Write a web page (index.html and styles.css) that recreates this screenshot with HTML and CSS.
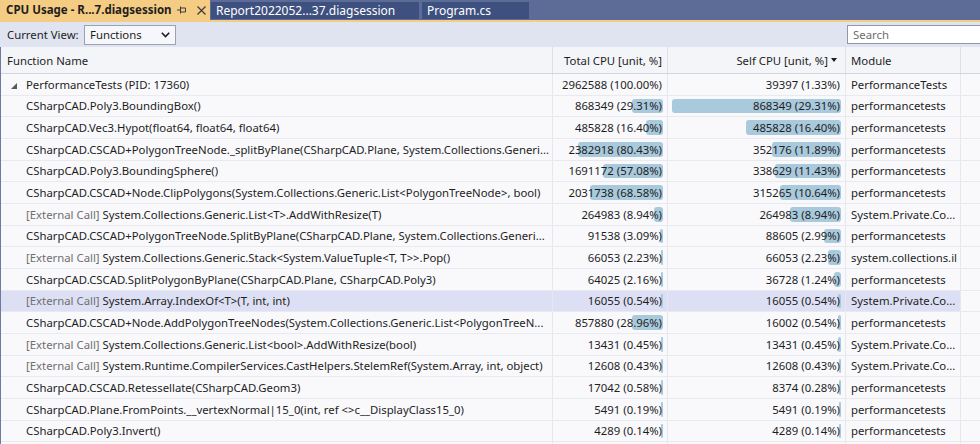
FILE: index.html
```html
<!DOCTYPE html>
<html lang="en">
<head>
    <meta charset="UTF-8">
    <title>CPU Usage</title>
    <link rel="stylesheet" href="styles.css">
</head>
<body>

    <div class="tabs">
        <div class="tab active">
            <span class="tab-title">CPU Usage - R...7.diagsession</span>
            <svg class="pin" width="10" height="8" viewBox="0 0 10 8">
                <path d="M0 4H3M3.5 0.5V7.5M3.5 2H8.5V6H3.5" fill="none" stroke="#3b3b3b" stroke-width="1"/>
            </svg>
            <svg class="close" width="9" height="9" viewBox="0 0 9 9">
                <path d="M0.5 0.5L8.5 8.5M8.5 0.5L0.5 8.5" stroke="#3b3b3b" stroke-width="1.2"/>
            </svg>
        </div>
        <div class="tab">Report2022052...37.diagsession</div>
        <div class="tab tab-gap">Program.cs</div>
    </div>

    <div class="toolbar">
        <label class="view-label">Current View:</label>
        <div class="dropdown">
            <span>Functions</span>
            <svg width="9" height="6" viewBox="0 0 9 6">
                <path d="M0.8 0.8L4.5 4.6L8.2 0.8" fill="none" stroke="#1e1e1e" stroke-width="1.6"/>
            </svg>
        </div>
        <div class="search">Search</div>
    </div>

    <div class="grid">
        <div class="row head">
            <div class="cell name">Function Name</div>
            <div class="cell num">Total CPU [unit, %]</div>
            <div class="cell num">Self CPU [unit, %]<span class="sort"></span></div>
            <div class="cell module">Module</div>
            <div class="cell rest"></div>
        </div>

        <div class="row">
            <div class="cell name">
                <svg class="expander" width="6" height="6" viewBox="0 0 6 6"><path d="M6 0V6H0Z" fill="#595959"/></svg>
                PerformanceTests (PID: 17360)
            </div>
            <div class="cell num"><span class="val">2962588 (100.00%)</span></div>
            <div class="cell num"><span class="val">39397 (1.33%)</span></div>
            <div class="cell module">PerformanceTests</div>
            <div class="cell rest"></div>
        </div>

        <div class="row">
            <div class="cell name">CSharpCAD.Poly3.BoundingBox()</div>
            <div class="cell num"><i class="bar" style="width: 31.1px"></i><span class="val">868349 (29.31%)</span></div>
            <div class="cell num"><i class="bar" style="width: 169px"></i><span class="val">868349 (29.31%)</span></div>
            <div class="cell module">performancetests</div>
            <div class="cell rest"></div>
        </div>

        <div class="row">
            <div class="cell name">CSharpCAD.Vec3.Hypot(float64, float64, float64)</div>
            <div class="cell num"><i class="bar" style="width: 17.4px"></i><span class="val">485828 (16.40%)</span></div>
            <div class="cell num"><i class="bar" style="width: 94.6px"></i><span class="val">485828 (16.40%)</span></div>
            <div class="cell module">performancetests</div>
            <div class="cell rest"></div>
        </div>

        <div class="row">
            <div class="cell name">CSharpCAD.CSCAD+PolygonTreeNode._splitByPlane(CSharpCAD.Plane, System.Collections.Generi...</div>
            <div class="cell num"><i class="bar" style="width: 85.3px"></i><span class="val">2382918 (80.43%)</span></div>
            <div class="cell num"><i class="bar" style="width: 68.6px"></i><span class="val">352176 (11.89%)</span></div>
            <div class="cell module">performancetests</div>
            <div class="cell rest"></div>
        </div>

        <div class="row">
            <div class="cell name">CSharpCAD.Poly3.BoundingSphere()</div>
            <div class="cell num"><i class="bar" style="width: 60.5px"></i><span class="val">1691172 (57.08%)</span></div>
            <div class="cell num"><i class="bar" style="width: 65.9px"></i><span class="val">338629 (11.43%)</span></div>
            <div class="cell module">performancetests</div>
            <div class="cell rest"></div>
        </div>

        <div class="row">
            <div class="cell name">CSharpCAD.CSCAD+Node.ClipPolygons(System.Collections.Generic.List&lt;PolygonTreeNode&gt;, bool)</div>
            <div class="cell num"><i class="bar" style="width: 72.7px"></i><span class="val">2031738 (68.58%)</span></div>
            <div class="cell num"><i class="bar" style="width: 61.4px"></i><span class="val">315265 (10.64%)</span></div>
            <div class="cell module">performancetests</div>
            <div class="cell rest"></div>
        </div>

        <div class="row">
            <div class="cell name"><span class="ext">[External Call]</span> System.Collections.Generic.List&lt;T&gt;.AddWithResize(T)</div>
            <div class="cell num"><i class="bar" style="width: 9.5px"></i><span class="val">264983 (8.94%)</span></div>
            <div class="cell num"><i class="bar" style="width: 51.5px"></i><span class="val">264983 (8.94%)</span></div>
            <div class="cell module">System.Private.Co...</div>
            <div class="cell rest"></div>
        </div>

        <div class="row">
            <div class="cell name">CSharpCAD.CSCAD+PolygonTreeNode.SplitByPlane(CSharpCAD.Plane, System.Collections.Generi...</div>
            <div class="cell num"><i class="bar" style="width: 3.3px"></i><span class="val">91538 (3.09%)</span></div>
            <div class="cell num"><i class="bar" style="width: 17.2px"></i><span class="val">88605 (2.99%)</span></div>
            <div class="cell module">performancetests</div>
            <div class="cell rest"></div>
        </div>

        <div class="row">
            <div class="cell name"><span class="ext">[External Call]</span> System.Collections.Generic.Stack&lt;System.ValueTuple&lt;T, T&gt;&gt;.Pop()</div>
            <div class="cell num"><i class="bar" style="width: 2.4px"></i><span class="val">66053 (2.23%)</span></div>
            <div class="cell num"><i class="bar" style="width: 12.9px"></i><span class="val">66053 (2.23%)</span></div>
            <div class="cell module">system.collections.il</div>
            <div class="cell rest"></div>
        </div>

        <div class="row">
            <div class="cell name">CSharpCAD.CSCAD.SplitPolygonByPlane(CSharpCAD.Plane, CSharpCAD.Poly3)</div>
            <div class="cell num"><i class="bar" style="width: 2.3px"></i><span class="val">64025 (2.16%)</span></div>
            <div class="cell num"><i class="bar" style="width: 7.2px"></i><span class="val">36728 (1.24%)</span></div>
            <div class="cell module">performancetests</div>
            <div class="cell rest"></div>
        </div>

        <div class="row selected">
            <div class="cell name"><span class="ext">[External Call]</span> System.Array.IndexOf&lt;T&gt;(T, int, int)</div>
            <div class="cell num"><i class="bar" style="width: 0.6px"></i><span class="val">16055 (0.54%)</span></div>
            <div class="cell num"><i class="bar" style="width: 3.1px"></i><span class="val">16055 (0.54%)</span></div>
            <div class="cell module">System.Private.Co...</div>
            <div class="cell rest"></div>
        </div>

        <div class="row">
            <div class="cell name">CSharpCAD.CSCAD+Node.AddPolygonTreeNodes(System.Collections.Generic.List&lt;PolygonTreeN...</div>
            <div class="cell num"><i class="bar" style="width: 30.7px"></i><span class="val">857880 (28.96%)</span></div>
            <div class="cell num"><i class="bar" style="width: 3.1px"></i><span class="val">16002 (0.54%)</span></div>
            <div class="cell module">performancetests</div>
            <div class="cell rest"></div>
        </div>

        <div class="row">
            <div class="cell name"><span class="ext">[External Call]</span> System.Collections.Generic.List&lt;bool&gt;.AddWithResize(bool)</div>
            <div class="cell num"><i class="bar" style="width: 0.5px"></i><span class="val">13431 (0.45%)</span></div>
            <div class="cell num"><i class="bar" style="width: 2.6px"></i><span class="val">13431 (0.45%)</span></div>
            <div class="cell module">System.Private.Co...</div>
            <div class="cell rest"></div>
        </div>

        <div class="row">
            <div class="cell name"><span class="ext">[External Call]</span> System.Runtime.CompilerServices.CastHelpers.StelemRef(System.Array, int, object)</div>
            <div class="cell num"><i class="bar" style="width: 0.5px"></i><span class="val">12608 (0.43%)</span></div>
            <div class="cell num"><i class="bar" style="width: 2.5px"></i><span class="val">12608 (0.43%)</span></div>
            <div class="cell module">System.Private.Co...</div>
            <div class="cell rest"></div>
        </div>

        <div class="row">
            <div class="cell name">CSharpCAD.CSCAD.Retessellate(CSharpCAD.Geom3)</div>
            <div class="cell num"><i class="bar" style="width: 0.6px"></i><span class="val">17042 (0.58%)</span></div>
            <div class="cell num"><i class="bar" style="width: 1.6px"></i><span class="val">8374 (0.28%)</span></div>
            <div class="cell module">performancetests</div>
            <div class="cell rest"></div>
        </div>

        <div class="row">
            <div class="cell name">CSharpCAD.Plane.FromPoints.__vertexNormal|15_0(int, ref &lt;&gt;c__DisplayClass15_0)</div>
            <div class="cell num"><i class="bar" style="width: 0.2px"></i><span class="val">5491 (0.19%)</span></div>
            <div class="cell num"><i class="bar" style="width: 1.1px"></i><span class="val">5491 (0.19%)</span></div>
            <div class="cell module">performancetests</div>
            <div class="cell rest"></div>
        </div>

        <div class="row">
            <div class="cell name">CSharpCAD.Poly3.Invert()</div>
            <div class="cell num"><i class="bar" style="width: 0.2px"></i><span class="val">4289 (0.14%)</span></div>
            <div class="cell num"><i class="bar" style="width: 0.8px"></i><span class="val">4289 (0.14%)</span></div>
            <div class="cell module">performancetests</div>
            <div class="cell rest"></div>
        </div>

        <div class="row">
            <div class="cell name"></div>
            <div class="cell num"></div>
            <div class="cell num"></div>
            <div class="cell module"></div>
            <div class="cell rest"></div>
        </div>
    </div>

</body>
</html>
```

FILE: styles.css
```css
html,
body {
    margin: 0;
    height: 100%;
    overflow: hidden;
}
body {
    font-family: "Noto Sans", "Open Sans", sans-serif;
    font-size: 11.35px;
    color: #1e1e1e;
    background-color: #f9f9fc;
}

/* document tabs */
.tabs {
    display: flex;
    align-items: flex-start;
    height: 20px;
    background-color: #5d6b97;
    border-bottom: 2px solid #f5cc84;
}
.tab {
    height: 17px;
    line-height: 17px;
    margin-top: 2px;
    margin-left: 1px;
    padding: 0 5px;
    width: 198px;
    color: #ffffff;
    background-color: #3e5080;
    white-space: nowrap;
    font-size: 12px;
}
.tab-gap {
    margin-left: 3px;
    width: 97px;
}
.tab.active {
    display: flex;
    align-items: center;
    width: 204px;
    height: 20px;
    margin: 0;
    padding: 0 0 0 6px;
    color: #1e1e1e;
    background-color: #f5cc84;
    font-weight: bold;
    font-size: 11.5px;
    line-height: 20px;
}
.tab-title {
    width: 171px;
}
.pin {
    margin-right: 10px;
}

/* toolbar */
.toolbar {
    display: flex;
    align-items: center;
    height: 25px;
    padding-left: 7px;
    background-color: #dfe4f0;
}
.view-label {
    width: 77px;
}
.dropdown {
    display: flex;
    align-items: center;
    justify-content: space-between;
    box-sizing: border-box;
    width: 92px;
    height: 20px;
    padding: 0 5px 0 5px;
    border: 1px solid #9aa1b3;
    background-color: #f6f7fb;
}
.search {
    box-sizing: border-box;
    width: 140px;
    height: 19px;
    line-height: 17px;
    margin-left: auto;
    margin-right: -7px;
    padding-left: 5px;
    border: 1px solid #8f97aa;
    background-color: #ffffff;
    color: #6d6d6d;
}

/* data grid */
.grid {
    border-left: 1px solid #6f7a9c;
}
.row {
    display: grid;
    grid-template-columns: 552px 115px 178px 115px 1fr;
    height: 21.67px;
    box-sizing: border-box;
    border-bottom: 1px solid #e9eaf0;
}
.row.head {
    height: 27px;
    background-color: #f4f5f9;
    border-bottom: 1px solid #d3d6e0;
}
.row.selected {
    background-color: #dde0f4;
}
.row.selected .rest {
    background-color: #f9f9fc;
}
.cell {
    position: relative;
    display: flex;
    align-items: center;
    overflow: hidden;
    white-space: nowrap;
    border-right: 1px solid #e6e8ef;
}
.head .cell {
    border-right-color: #dcdfe8;
}
.rest {
    border-right: none;
}
.cell.name {
    padding-left: 25px;
}
.head .cell.name {
    padding-left: 6px;
}
.cell.num {
    justify-content: flex-end;
    padding-right: 5px;
}
.cell.module {
    padding-left: 5px;
}
.ext {
    color: #6f6f6f;
    margin-right: 3px;
}
.expander {
    position: absolute;
    left: 10px;
    top: 9px;
}
.sort {
    width: 0;
    height: 0;
    margin-left: 3px;
    margin-right: 3px;
    border-left: 3px solid transparent;
    border-right: 3px solid transparent;
    border-top: 4px solid #1e1e1e;
}

/* cost bars, drawn behind the numbers */
.bar {
    position: absolute;
    right: 4px;
    top: 3px;
    bottom: 3px;
    min-width: 2px;
    border-radius: 3px;
    background-color: #a9c9dc;
}
.val {
    position: relative;
}
```
